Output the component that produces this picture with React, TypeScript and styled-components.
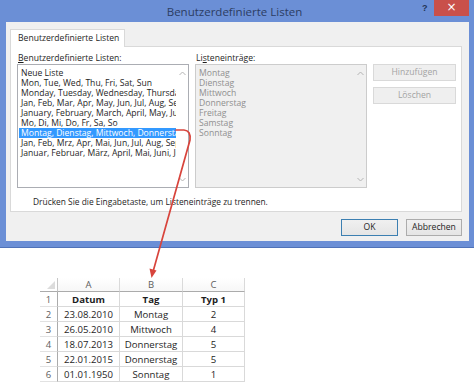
import { Fragment } from "react";
import styled, { createGlobalStyle } from "styled-components";

const GlobalStyle = createGlobalStyle`
  html, body {
    margin: 0;
    padding: 0;
    background: #ffffff;
  }
  body {
    width: 474px;
    height: 391px;
    overflow: hidden;
    position: relative;
  }
`;

// only the part that fits before the scrollbar is visible anyway
const listItems = [
  "Neue Liste",
  "Mon, Tue, Wed, Thu, Fri, Sat, Sun",
  "Monday, Tuesday, Wednesday, Thursday",
  "Jan, Feb, Mar, Apr, May, Jun, Jul, Aug, Sep",
  "January, February, March, April, May, June",
  "Mo, Di, Mi, Do, Fr, Sa, So",
  "Montag, Dienstag, Mittwoch, Donnerstag",
  "Jan, Feb, Mrz, Apr, Mai, Jun, Jul, Aug, Sep",
  "Januar, Februar, März, April, Mai, Juni, Juli",
];

const entries = [
  "Montag",
  "Dienstag",
  "Mittwoch",
  "Donnerstag",
  "Freitag",
  "Samstag",
  "Sonntag",
];

const rows = [
  ["Datum", "Tag", "Typ 1"],
  ["23.08.2010", "Montag", "2"],
  ["26.05.2010", "Mittwoch", "4"],
  ["18.07.2013", "Donnerstag", "5"],
  ["22.01.2015", "Donnerstag", "5"],
  ["01.01.1950", "Sonntag", "1"],
];

function Chevron({ down }: { down?: boolean }) {
  return (
    <svg width="7" height="5" viewBox="0 0 7 5">
      <path
        d={down ? "M0.5 1 L3.5 4 L6.5 1" : "M0.5 4 L3.5 1 L6.5 4"}
        fill="none"
        stroke="#b4b4b4"
        strokeWidth="1"
      />
    </svg>
  );
}

export default function App() {
  return (
    <>
      <GlobalStyle />
      <StyledWindow>
        <StyledTitleBar>
          <span />
          <StyledTitle>Benutzerdefinierte Listen</StyledTitle>
          <StyledControls>
            <StyledHelp>?</StyledHelp>
            <StyledClose>×</StyledClose>
          </StyledControls>
        </StyledTitleBar>
        <StyledClient>
          <StyledTab>Benutzerdefinierte Listen</StyledTab>
          <StyledPanel>
            <StyledColumns>
              <StyledColumn>
                <StyledLabel>
                  <u>B</u>enutzerdefinierte Listen:
                </StyledLabel>
                <StyledListBox>
                  <StyledItems>
                    {listItems.map((item, i) => (
                      <StyledItem key={item} $selected={i === 6}>
                        {item}
                      </StyledItem>
                    ))}
                  </StyledItems>
                  <StyledScrollbar>
                    <Chevron />
                    <Chevron down />
                  </StyledScrollbar>
                </StyledListBox>
              </StyledColumn>
              <StyledColumn>
                <StyledLabel>
                  Li<u>s</u>teneinträge:
                </StyledLabel>
                <StyledListBox $disabled>
                  <StyledItems>
                    {entries.map((item) => (
                      <StyledItem key={item} $disabled>
                        {item}
                      </StyledItem>
                    ))}
                  </StyledItems>
                  <StyledScrollbar>
                    <Chevron />
                    <Chevron down />
                  </StyledScrollbar>
                </StyledListBox>
              </StyledColumn>
              <StyledButtonColumn>
                <StyledDisabledButton>Hinzufügen</StyledDisabledButton>
                <StyledDisabledButton>Löschen</StyledDisabledButton>
              </StyledButtonColumn>
            </StyledColumns>
            <StyledHint>
              Drücken Sie die Eingabetaste, um Listeneinträge zu trennen.
            </StyledHint>
          </StyledPanel>
          <StyledFooter>
            <StyledButton $primary>OK</StyledButton>
            <StyledButton>Abbrechen</StyledButton>
          </StyledFooter>
        </StyledClient>
      </StyledWindow>

      <StyledSheet>
        <StyledCorner />
        {["A", "B", "C"].map((c) => (
          <StyledColHead key={c}>{c}</StyledColHead>
        ))}
        {rows.map((row, r) => (
          <Fragment key={r}>
            <StyledRowHead>{r + 1}</StyledRowHead>
            {row.map((cell, c) => (
              <StyledCell key={c} $bold={r === 0}>
                {cell}
              </StyledCell>
            ))}
          </Fragment>
        ))}
      </StyledSheet>

      <StyledArrow width="474" height="391" viewBox="0 0 474 391">
        <path
          d="M176 130 L184 130 Q191 130.5 190 140 L153.5 270"
          fill="none"
          stroke="#d8443c"
          strokeWidth="1.7"
          strokeLinecap="round"
        />
        <path d="M151.5 278 L149.5 268.5 L156.5 270.5 Z" fill="#d8443c" />
      </StyledArrow>
    </>
  );
}

const StyledWindow = styled.div`
  width: 474px;
  box-sizing: border-box;
  background: #6b8fd6;
  padding: 0 5px 6px 6px;
  border-bottom: 1px solid #4f72b8;
  font-family: "Open Sans", "Noto Sans", sans-serif;
`;

const StyledTitleBar = styled.div`
  height: 22px;
  display: grid;
  grid-template-columns: 1fr auto 1fr;
  align-items: center;
  margin: 0 -5px 0 -6px;
  padding-right: 5px;
`;

const StyledTitle = styled.div`
  font-size: 11.5px;
  color: #2b3d63;
  line-height: 22px;
  padding-top: 1px;
`;

const StyledControls = styled.div`
  display: flex;
  justify-content: flex-end;
  align-self: start;
  align-items: flex-start;
`;

const StyledHelp = styled.div`
  font-family: "Liberation Sans", sans-serif;
  font-weight: bold;
  font-size: 9px;
  color: #233456;
  line-height: 16px;
  width: 12px;
`;

const StyledClose = styled.div`
  width: 35px;
  height: 16px;
  background: #c9504a;
  color: #ffffff;
  font-family: "DejaVu Sans", sans-serif;
  font-size: 12px;
  line-height: 15px;
  text-align: center;
`;

const StyledClient = styled.div`
  background: #f0f0f0;
  padding: 7px 7px 5px 4px;
  display: flex;
  flex-direction: column;
`;

const StyledTab = styled.div`
  align-self: flex-start;
  box-sizing: border-box;
  width: 115px;
  height: 18px;
  margin-bottom: -1px;
  padding-left: 7px;
  background: #ffffff;
  border: 1px solid #d9d9d9;
  border-bottom: none;
  font-size: 8.6px;
  line-height: 17px;
  color: #1e1e1e;
  position: relative;
  z-index: 1;
`;

const StyledPanel = styled.div`
  background: #ffffff;
  border: 1px solid #d9d9d9;
  height: 166px;
  box-sizing: border-box;
  padding: 6px 5px 0 6px;
`;

const StyledColumns = styled.div`
  display: grid;
  grid-template-columns: 172px 172px 83px;
  column-gap: 6px;
`;

const StyledColumn = styled.div`
  display: flex;
  flex-direction: column;
`;

const StyledLabel = styled.div`
  font-size: 8.6px;
  line-height: 11px;
  height: 11px;
  color: #1e1e1e;
  padding-left: 1px;
  white-space: nowrap;

  u {
    text-decoration-thickness: 1px;
  }
`;

const StyledListBox = styled.div<{ $disabled?: boolean }>`
  box-sizing: border-box;
  height: 124px;
  display: flex;
  border: 1px solid ${({ $disabled }) => ($disabled ? "#cccccc" : "#abadb3")};
  background: ${({ $disabled }) => ($disabled ? "#f0f0f0" : "#ffffff")};
`;

const StyledItems = styled.div`
  flex: 1;
  min-width: 0;
  overflow: hidden;
  padding: 3px 0 0 1px;
`;

const StyledItem = styled.div<{ $selected?: boolean; $disabled?: boolean }>`
  font-size: 8.6px;
  line-height: 10px;
  height: 10px;
  padding-left: 2px;
  white-space: nowrap;
  overflow: hidden;
  color: ${({ $selected, $disabled }) =>
    $selected ? "#ffffff" : $disabled ? "#8f8f8f" : "#1e1e1e"};
  background: ${({ $selected }) => ($selected ? "#3399ff" : "transparent")};
`;

const StyledScrollbar = styled.div`
  width: 12px;
  display: flex;
  flex-direction: column;
  justify-content: space-between;
  align-items: center;
  padding: 6px 0 5px;
`;

const StyledButtonColumn = styled.div`
  padding-top: 11px;
  display: flex;
  flex-direction: column;
  gap: 6px;
`;

const StyledDisabledButton = styled.div`
  box-sizing: border-box;
  height: 17px;
  border: 1px solid #d9d9d9;
  background: #efefef;
  color: #a3a3a3;
  font-size: 8.6px;
  line-height: 15px;
  text-align: center;
`;

const StyledHint = styled.div`
  font-size: 8.4px;
  line-height: 11px;
  color: #1e1e1e;
  padding: 8px 0 0 16px;
`;

const StyledFooter = styled.div`
  display: flex;
  justify-content: flex-end;
  gap: 8px;
  padding-top: 7px;
`;

const StyledButton = styled.div<{ $primary?: boolean }>`
  box-sizing: border-box;
  width: ${({ $primary }) => ($primary ? "57px" : "56px")};
  height: 17px;
  border: 1px solid ${({ $primary }) => ($primary ? "#3c7fb1" : "#acacac")};
  background: linear-gradient(#f0f0f0, #e5e5e5);
  color: #1e1e1e;
  font-size: 8.6px;
  line-height: 15px;
  text-align: center;
`;

const StyledSheet = styled.div`
  margin: 30px 0 0 40px;
  display: grid;
  grid-template-columns: 18px 62px 63px 62px;
  grid-template-rows: 14px repeat(6, 15px);
  font-family: "Open Sans", "Lato", sans-serif;
  width: max-content;
`;

const StyledCorner = styled.div`
  border-right: 1px solid #c6c6c6;
  border-bottom: 1px solid #ababab;
  background: #ffffff;
  position: relative;

  &::after {
    content: "";
    position: absolute;
    right: 2px;
    bottom: 2px;
    border-left: 8px solid transparent;
    border-bottom: 8px solid #dcdcdc;
  }
`;

const StyledColHead = styled.div`
  border-right: 1px solid #dadada;
  border-bottom: 1px solid #ababab;
  background: linear-gradient(#ffffff, #f7f7f7);
  color: #5e5e5e;
  font-size: 9.5px;
  line-height: 14px;
  text-align: center;
`;

const StyledRowHead = styled.div`
  border-right: 1px solid #ababab;
  border-bottom: 1px solid #e2e2e2;
  color: #5e5e5e;
  font-size: 9.5px;
  line-height: 15px;
  text-align: center;
`;

const StyledCell = styled.div<{ $bold?: boolean }>`
  border-right: 1px solid #d9d9d9;
  border-bottom: 1px solid #d9d9d9;
  color: #1e1e1e;
  font-size: 9.6px;
  font-weight: ${({ $bold }) => ($bold ? 700 : 400)};
  line-height: 15px;
  text-align: center;
  white-space: nowrap;
`;

const StyledArrow = styled.svg`
  position: absolute;
  top: 0;
  left: 0;
  pointer-events: none;
`;
